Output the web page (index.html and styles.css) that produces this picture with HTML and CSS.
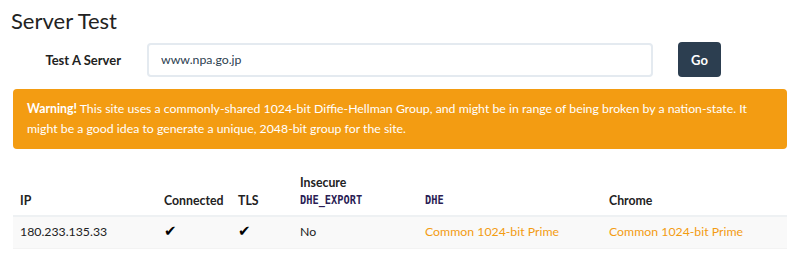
FILE: index.html
```html
<!DOCTYPE html>
<html>
<head>
  <title>Server Test</title>
  <link rel="stylesheet" href="styles.css">
</head>
<body>
  <div class="container">
    <h1 class="page-title">Server Test</h1>

    <!-- server form -->
    <form class="server-form">
      <label class="form-label" for="server">Test A Server</label>
      <input class="form-input" type="text" id="server" value="www.npa.go.jp">
      <button class="btn-go" type="button">Go</button>
    </form>

    <div class="alert-warning">
      <strong>Warning!</strong> This site uses a commonly-shared 1024-bit Diffie-Hellman Group, and might be in range of being broken by a nation-state. It might be a good idea to generate a unique, 2048-bit group for the site.
    </div>

    <!-- results -->
    <table class="results">
      <thead>
        <tr>
          <th class="col-ip">IP</th>
          <th class="col-conn">Connected</th>
          <th class="col-tls">TLS</th>
          <th class="col-export">Insecure<br><code>DHE_EXPORT</code></th>
          <th class="col-dhe"><code>DHE</code></th>
          <th class="col-chrome">Chrome</th>
        </tr>
      </thead>
      <tbody>
        <tr>
          <td>180.233.135.33</td>
          <td><span class="check">&#10004;</span></td>
          <td><span class="check">&#10004;</span></td>
          <td>No</td>
          <td class="text-warning">Common 1024-bit Prime</td>
          <td class="text-warning">Common 1024-bit Prime</td>
        </tr>
      </tbody>
    </table>
  </div>
</body>
</html>
```

FILE: styles.css
```css
body {
  margin: 0;
  font-family: Lato, 'Open Sans', sans-serif;
  font-size: 12.3px;
  color: #2c3e50;
  background-color: #ffffff;
}
.container {
  padding: 0 13px;
}
.page-title {
  font-size: 22px;
  font-weight: normal;
  margin: 0 0 0 -2px;
  padding-top: 7px;
  line-height: 28px;
  color: #222;
}
.server-form {
  display: flex;
  align-items: center;
  margin-top: 7px;
}
.form-label {
  width: 108px;
  text-align: right;
  font-size: 13px;
  font-weight: bold;
  color: #222;
}
.form-input {
  margin-left: 26px;
  width: 506px;
  height: 34px;
  box-sizing: border-box;
  border: 2px solid #e4eaf0;
  border-radius: 4px;
  padding: 0 12px;
  font-family: Lato, sans-serif;
  font-size: 12.3px;
  color: #2c3e50;
}
.btn-go {
  margin-left: 25px;
  width: 43px;
  height: 35px;
  border: none;
  border-radius: 4px;
  background-color: #2c3e50;
  color: #ffffff;
  font-family: Lato, sans-serif;
  font-size: 13px;
  font-weight: bold;
}
.alert-warning {
  margin-top: 12px;
  background-color: #f39c12;
  color: #ffffff;
  border-radius: 4px;
  padding: 10px 14px;
  line-height: 20px;
}
.results {
  width: 100%;
  table-layout: fixed;
  border-collapse: collapse;
  margin-top: 19px;
  color: #222;
}
.results th {
  box-sizing: border-box;
  text-align: left;
  vertical-align: bottom;
  padding: 6px 7px;
  line-height: 17px;
  border-bottom: 2px solid #eef1f3;
}
.results td {
  padding: 6px 7px 8px;
  line-height: 17px;
  background-color: #f9f9f9;
  border-bottom: 1px solid #f3f3f3;
}
.col-ip { width: 144px; }
.col-conn { width: 74px; }
.col-tls { width: 62px; }
.col-export { width: 125px; }
.col-dhe { width: 184px; }
code {
  display: inline-block;
  font-family: 'DejaVu Sans Mono', monospace;
  font-size: 12px;
  font-weight: bold;
  color: #2a1d55;
  transform: scaleX(0.86);
  transform-origin: left center;
}
.check {
  font-family: 'DejaVu Sans', sans-serif;
  font-size: 15px;
  color: #000;
}
.text-warning {
  color: #f39c12;
}
```
